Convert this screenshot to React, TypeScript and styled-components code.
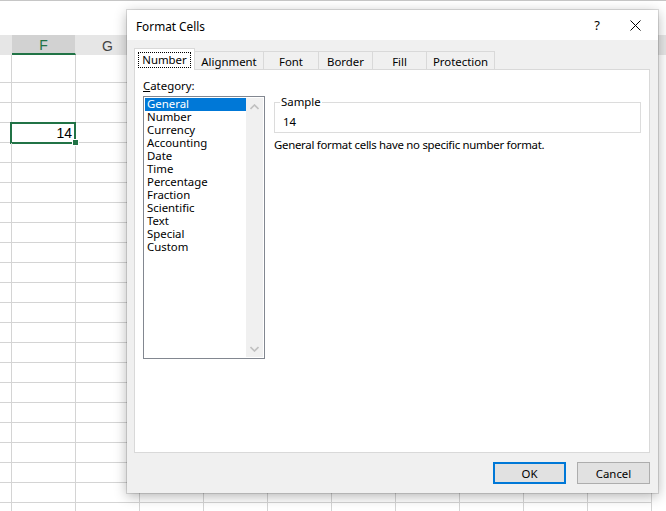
import React from "react";
import styled, { createGlobalStyle } from "styled-components";

const GlobalStyle = createGlobalStyle`
  html, body { margin: 0; padding: 0; background: #fff; }
  body { font-family: "Noto Sans", "Open Sans", sans-serif; }
  * { box-sizing: border-box; }
`;

const UI_FONT = `"Noto Sans", "Open Sans", sans-serif`;
const GRID = "#d4d4d4";
const GREEN = "#217346";

const Page = styled.div`
  position: relative;
  width: 666px;
  height: 511px;
  overflow: hidden;
  background: #fff;
`;

const Sheet = styled.div`
  display: flex;
  flex-direction: column;
  border-top: 1px solid #c6c6c6;
`;

const Ribbon = styled.div`
  height: 34px;
  background: #fff;
`;

const GridRow = styled.div<{ $h: number; $header?: boolean }>`
  display: grid;
  grid-template-columns: 12px repeat(10, 64px);
  height: ${(p) => p.$h}px;
  background: ${(p) => (p.$header ? "#e6e6e6" : "#fff")};
`;

const Cell = styled.div<{ $header?: boolean; $active?: boolean }>`
  position: relative;
  display: flex;
  align-items: center;
  justify-content: ${(p) => (p.$header ? "center" : "flex-end")};
  padding: 0 3px 0 0;
  font-family: "Liberation Sans", Arial, sans-serif;
  font-size: 14px;
  color: ${(p) => (p.$active ? GREEN : p.$header ? "#444" : "#000")};
  background: ${(p) => (p.$active ? "#d2d2d2" : "transparent")};
  border-right: 1px solid ${(p) => (p.$header ? "#e6e6e6" : GRID)};
  border-bottom: ${(p) =>
    p.$active ? `2px solid ${GREEN}` : p.$header ? "none" : `1px solid ${GRID}`};
  ${(p) => (p.$header ? "padding: 1px 0 0 0;" : "")}
`;

const SelectedCell = styled(Cell)`
  &::after {
    content: "";
    position: absolute;
    left: -2px;
    top: -1px;
    right: -1px;
    bottom: -2px;
    border: 2px solid ${GREEN};
  }
  &::before {
    content: "";
    position: absolute;
    right: -4px;
    bottom: -4px;
    width: 5px;
    height: 5px;
    background: ${GREEN};
    border: 1px solid #fff;
    z-index: 1;
  }
`;

const Dialog = styled.div`
  position: absolute;
  left: 127px;
  top: 10px;
  width: 531px;
  height: 483px;
  display: flex;
  flex-direction: column;
  background: #f0f0f0;
  box-shadow: 0 0 0 1px rgba(0, 0, 0, 0.12), 0 3px 12px rgba(0, 0, 0, 0.3);
  font-family: ${UI_FONT};
  font-size: 11.4px;
  color: #000;
`;

const TitleBar = styled.div`
  height: 30px;
  background: #fff;
  display: flex;
  align-items: center;
  padding-left: 9px;
`;

const Title = styled.div`
  flex: 1;
  font-size: 11.8px;
  padding-top: 1px;
`;

const TitleButton = styled.div<{ $w: number }>`
  width: ${(p) => p.$w}px;
  height: 30px;
  display: flex;
  align-items: center;
  justify-content: center;
  font-size: 13px;
`;

const Body = styled.div`
  flex: 1;
  display: flex;
  flex-direction: column;
  padding: 8px 8px 8px 7px;
`;

const TabRow = styled.div`
  display: flex;
  align-items: flex-end;
  height: 21px;
`;

const Tab = styled.div<{ $w: number; $selected?: boolean }>`
  width: ${(p) => p.$w}px;
  height: ${(p) => (p.$selected ? 22 : 18)}px;
  margin-bottom: ${(p) => (p.$selected ? -1 : 0)}px;
  margin-left: -1px;
  &:first-child { margin-left: 0; }
  position: relative;
  z-index: ${(p) => (p.$selected ? 2 : 1)};
  background: ${(p) => (p.$selected ? "#fff" : "#f0f0f0")};
  border: 1px solid #d9d9d9;
  border-bottom: none;
  display: flex;
  align-items: center;
  justify-content: center;
  padding-top: ${(p) => (p.$selected ? 0 : 1)}px;
`;

const FocusLabel = styled.span`
  border: 1px dotted #000;
  padding: 0 3px;
  line-height: 14px;
`;

const Panel = styled.div`
  height: 384px;
  background: #fff;
  border: 1px solid #d9d9d9;
  display: flex;
  flex-direction: column;
  padding: 8px 8px 0 8px;
`;

const Columns = styled.div`
  display: flex;
  gap: 9px;
`;

const LeftCol = styled.div`
  display: flex;
  flex-direction: column;
`;

const Label = styled.div`
  height: 18px;
  line-height: 16px;
  u { text-decoration: underline; }
`;

const ListBox = styled.div`
  width: 122px;
  height: 263px;
  border: 1px solid #828790;
  display: flex;
  padding: 1px;
`;

const Items = styled.div`
  flex: 1;
  display: flex;
  flex-direction: column;
  padding-top: 0;
`;

const Item = styled.div<{ $selected?: boolean }>`
  height: 13px;
  line-height: 12px;
  padding-left: 2px;
  background: ${(p) => (p.$selected ? "#0078d7" : "transparent")};
  color: ${(p) => (p.$selected ? "#fff" : "#000")};
  white-space: nowrap;
`;

const ScrollBar = styled.div`
  width: 17px;
  background: #f0f0f0;
  display: flex;
  flex-direction: column;
  justify-content: space-between;
  align-items: center;
  padding: 6px 0 5px;
`;

const RightCol = styled.div`
  flex: 1;
  display: flex;
  flex-direction: column;
  padding-top: 18px;
`;

const GroupBox = styled.fieldset`
  margin: 0;
  height: 37px;
  border: 1px solid #dcdcdc;
  padding: 0 0 0 8px;
  legend {
    padding: 0 1px;
    margin-left: -3px;
    line-height: 12px;
  }
`;

const SampleValue = styled.div`
  line-height: 14px;
  padding-top: 7px;
`;

const Description = styled.div`
  margin-top: 5px;
  line-height: 14px;
  letter-spacing: -0.27px;
`;

const Footer = styled.div`
  display: flex;
  justify-content: flex-end;
  gap: 11px;
  margin-top: 9px;
`;

const Button = styled.div<{ $default?: boolean }>`
  width: 73px;
  height: 22px;
  display: flex;
  align-items: center;
  justify-content: center;
  background: #e1e1e1;
  border: ${(p) => (p.$default ? "2px solid #0078d7" : "1px solid #adadad")};
`;

const Chevron = ({ up }: { up?: boolean }) => (
  <svg width="9" height="6" viewBox="0 0 9 6">
    <path
      d={up ? "M0.5 5 L4.5 1 L8.5 5" : "M0.5 1 L4.5 5 L8.5 1"}
      fill="none"
      stroke="#c0c0c0"
      strokeWidth="1.6"
    />
  </svg>
);

const CloseIcon = () => (
  <svg width="11" height="11" viewBox="0 0 11 11">
    <path d="M0.5 0.5 L10.5 10.5 M10.5 0.5 L0.5 10.5" stroke="#000" strokeWidth="1" />
  </svg>
);

const categories = [
  "General",
  "Number",
  "Currency",
  "Accounting",
  "Date",
  "Time",
  "Percentage",
  "Fraction",
  "Scientific",
  "Text",
  "Special",
  "Custom",
];

const tabs: [string, number][] = [
  ["Number", 61],
  ["Alignment", 70],
  ["Font", 56],
  ["Border", 55],
  ["Fill", 55],
  ["Protection", 69],
];

const COLS = 10;
const rowHeights = [28, ...Array.from({ length: 22 }, () => 20)];

export default function App() {
  return (
    <Page>
      <GlobalStyle />
      <Sheet>
        <Ribbon />
        <GridRow $h={20} $header>
          <Cell $header />
          {Array.from({ length: COLS }, (_, i) => (
            <Cell key={i} $header $active={i === 0}>
              {i === 0 ? "F" : i === 1 ? "G" : ""}
            </Cell>
          ))}
        </GridRow>
        {rowHeights.map((h, r) => (
          <GridRow key={r} $h={h}>
            <Cell />
            {Array.from({ length: COLS }, (_, c) =>
              r === 3 && c === 0 ? (
                <SelectedCell key={c}>14</SelectedCell>
              ) : (
                <Cell key={c} />
              )
            )}
          </GridRow>
        ))}
      </Sheet>

      <Dialog>
        <TitleBar>
          <Title>Format Cells</Title>
          <TitleButton $w={30}>?</TitleButton>
          <TitleButton $w={46}>
            <CloseIcon />
          </TitleButton>
        </TitleBar>
        <Body>
          <TabRow>
            {tabs.map(([t, w], i) => (
              <Tab key={t} $w={w} $selected={i === 0}>
                {i === 0 ? <FocusLabel>{t}</FocusLabel> : t}
              </Tab>
            ))}
          </TabRow>
          <Panel>
            <Columns>
              <LeftCol>
                <Label>
                  <u>C</u>ategory:
                </Label>
                <ListBox>
                  <Items>
                    {categories.map((c, i) => (
                      <Item key={c} $selected={i === 0}>
                        {c}
                      </Item>
                    ))}
                  </Items>
                  <ScrollBar>
                    <Chevron up />
                    <Chevron />
                  </ScrollBar>
                </ListBox>
              </LeftCol>
              <RightCol>
                <GroupBox>
                  <legend>Sample</legend>
                  <SampleValue>14</SampleValue>
                </GroupBox>
                <Description>
                  General format cells have no specific number format.
                </Description>
              </RightCol>
            </Columns>
          </Panel>
          <Footer>
            <Button $default>OK</Button>
            <Button>Cancel</Button>
          </Footer>
        </Body>
      </Dialog>
    </Page>
  );
}
